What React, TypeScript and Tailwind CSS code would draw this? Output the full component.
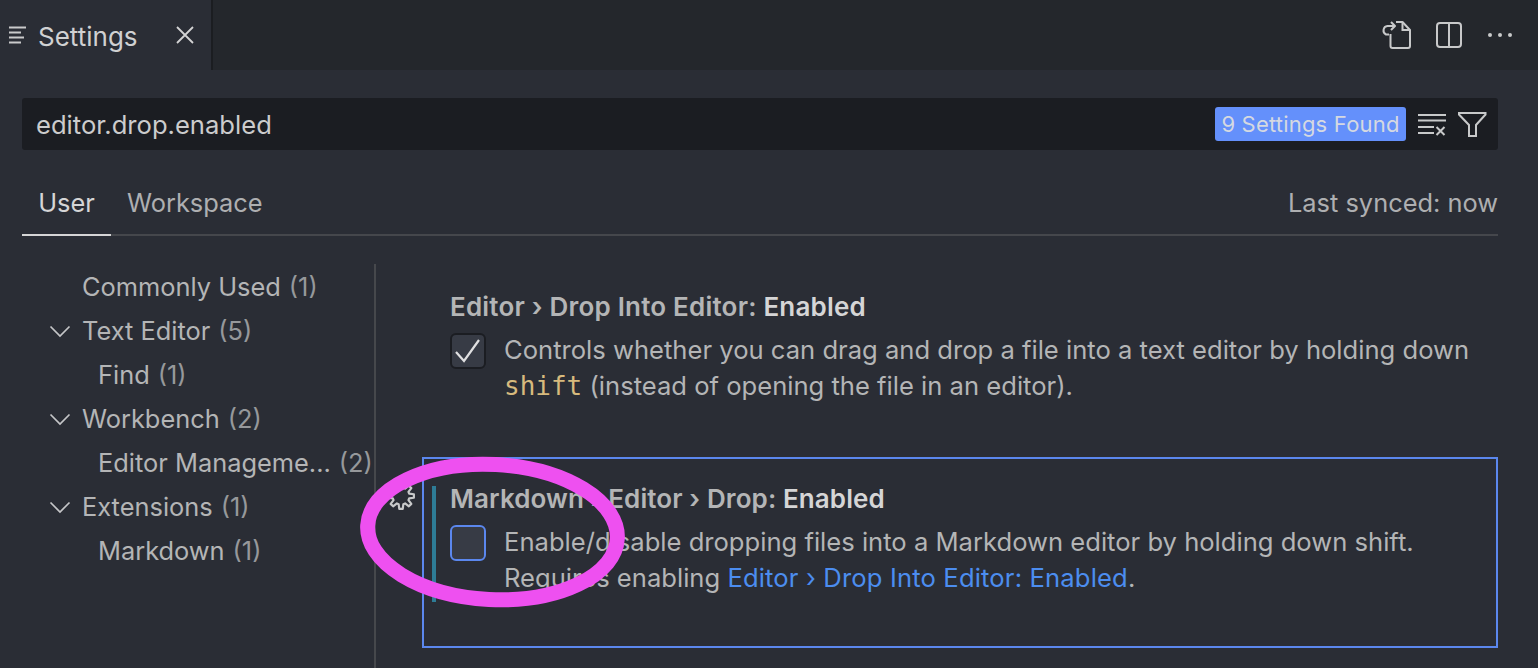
import React from "react";

const sans = "[font-family:Inter,'Noto_Sans',sans-serif]";

function Chevron() {
  return (
    <svg width="22" height="14" viewBox="0 0 22 14" fill="none" stroke="#c5c6c8" strokeWidth="1.7" className="shrink-0">
      <path d="M1.5 2.5 11 12 20.5 2.5" />
    </svg>
  );
}

function NavRow({ label, count, level, open }: { label: string; count: string; level: 0 | 1; open?: boolean }) {
  return (
    <div className={`flex h-11 items-center whitespace-nowrap text-[25.4px] ${level === 1 ? "pl-[98px]" : "pl-[82px]"} relative`}>
      {open && (
        <span className="absolute left-[49px] top-[15px]">
          <Chevron />
        </span>
      )}
      <span className="text-[#b4b5b6]">{label}</span>
      <span className="ml-[8px] text-[#96989b]">{count}</span>
    </div>
  );
}

function gearPath() {
  const cx = 15;
  const cy = 15;
  const teeth = 8;
  const pts: string[] = [];
  for (let i = 0; i < teeth; i++) {
    const a = (i / teeth) * Math.PI * 2;
    const step = (Math.PI * 2) / teeth;
    const offsets: [number, number][] = [
      [-0.36, 8.5],
      [-0.17, 13],
      [0.17, 13],
      [0.36, 8.5],
    ];
    for (const [o, r] of offsets) {
      const t = a + o * step;
      pts.push(`${(cx + r * Math.cos(t)).toFixed(2)} ${(cy + r * Math.sin(t)).toFixed(2)}`);
    }
  }
  return `M${pts.join("L")}Z`;
}

export default function App() {
  return (
    <div className={`relative h-[668px] w-[1538px] overflow-hidden bg-[#2a2d35] text-[25.6px] text-[#b4b5b6] ${sans}`}>
      {/* tab bar */}
      <div className="flex h-[70px] items-stretch bg-[#24272c]">
        <div className="flex w-[213px] items-center border-r-2 border-[#1b1d21] bg-[#2a2d35] pl-[9px]">
          <svg width="18" height="18" viewBox="0 0 18 18" stroke="#c9cacb" strokeWidth="2" className="mr-[11px]">
            <path d="M0 1.500h17M0 6.500h12M0 11.500h15M0 16.500h12" />
          </svg>
          <span className="pt-[2px] text-[26px] text-[#d0d1d2]">Settings</span>
          <svg width="18" height="18" viewBox="0 0 18 18" fill="none" stroke="#d4d4d5" strokeWidth="1.8" className="ml-[38px]">
            <path d="M1 1l16 16M17 1 1 17" />
          </svg>
        </div>
        <div className="ml-auto flex items-center pr-[26px]">
          <svg width="31" height="30" viewBox="0 0 31 30" fill="none" stroke="#c8c9ca" strokeWidth="2" className="mr-[23px]">
            <path d="M9.500 14V26a2 2 0 0 0 2 2H27a2 2 0 0 0 2-2V10L21.500 2H15" strokeLinejoin="round" />
            <path d="M21.500 2v8H29" />
            <path d="M10 2l4 4-4 4M14 6H6.500a4.500 4.500 0 0 0-1.500 8.500h3" strokeLinejoin="round" />
          </svg>
          <svg width="28" height="28" viewBox="0 0 28 28" fill="none" stroke="#c8c9ca" strokeWidth="2" className="mr-[25px]">
            <rect x="2" y="2" width="24" height="24" rx="3" />
            <path d="M14 2v24" />
          </svg>
          <div className="flex items-center gap-[6px]">
            <span className="h-1 w-1 rounded-full bg-[#c8c9ca]" />
            <span className="h-1 w-1 rounded-full bg-[#c8c9ca]" />
            <span className="h-1 w-1 rounded-full bg-[#c8c9ca]" />
          </div>
        </div>
      </div>

      <div className="pl-[22px] pr-[40px]">
        {/* search */}
        <div className="mt-[28px] flex h-[52px] items-center rounded-[3px] bg-[#1b1d22] pl-[14px] pr-[11px]">
          <span className="pt-[2px] text-[#cccccd]">editor.drop.enabled</span>
          <span className="ml-auto flex h-[34px] w-[191px] items-center justify-center whitespace-nowrap rounded-[3px] bg-[#6490fb] text-[22px] tracking-[0.2px] text-[#d5d9e1]">
            9 Settings Found
          </span>
          <svg width="29" height="24" viewBox="0 0 29 24" fill="none" stroke="#c8c9ca" strokeWidth="2" className="ml-[12px] mt-[2px]">
            <path d="M0 2h28M0 7.500h28M0 14h16M0 20h16" />
            <path d="M18.500 14l8 8M26.500 14l-8 8" />
          </svg>
          <svg width="29" height="25" viewBox="0 0 29 25" fill="none" stroke="#c8c9ca" strokeWidth="2" className="ml-[11px]">
            <path d="M1 1h26.500v1.500L18 13v11h-7V13L1 2.500z" />
          </svg>
        </div>

        {/* tabs */}
        <div className="mt-[28px] flex h-[58px] items-stretch border-b-2 border-[#45474c] text-[25.4px]">
          <div className="-mb-[2px] flex w-[89px] items-center justify-center border-b-2 border-[#d5d5d6] pb-[5px] text-[#d5d5d6]">User</div>
          <div className="ml-[16px] flex items-center pb-[5px] text-[#aeafb1]">Workspace</div>
          <div className="ml-auto flex items-center pb-[5px] text-[#aeafb1]">Last synced: now</div>
        </div>
      </div>

      {/* body */}
      <div className="relative mt-[28px] flex">
        <div className="h-[404px] w-[376px] shrink-0 border-r-2 border-[#46484c] pt-px">
          <NavRow label="Commonly Used" count="(1)" level={0} />
          <NavRow label="Text Editor" count="(5)" level={0} open />
          <NavRow label="Find" count="(1)" level={1} />
          <NavRow label="Workbench" count="(2)" level={0} open />
          <NavRow label="Editor Manageme..." count="(2)" level={1} />
          <NavRow label="Extensions" count="(1)" level={0} open />
          <NavRow label="Markdown" count="(1)" level={1} />
        </div>

        <div className="min-w-0 flex-1 pl-[46px] pr-[40px] pt-[20px]">
          <div className="pl-[28px]">
            <div className="flex h-[44px] items-center text-[26px] font-semibold tracking-[0.2px] text-[#b4b5b6]">
              Editor › Drop Into Editor:&nbsp;<span className="text-[#d5d5d6]">Enabled</span>
            </div>
            <div className="flex">
              <div className="mt-[5px] flex h-9 w-9 shrink-0 items-center justify-center rounded-[6px] border-2 border-[#1b1d22] bg-[#373b45]">
                <svg width="30" height="28" viewBox="0 0 30 28" fill="none" stroke="#e0e0e1" strokeWidth="2.200">
                  <path d="M3 15l8 9L26 3" />
                </svg>
              </div>
              <p className="ml-[18px] mt-[4px] leading-[36px]">
                Controls whether you can drag and drop a file into a text editor by holding down{" "}
                <code className="font-['DejaVu_Sans_Mono',monospace] text-[26px] leading-none text-[#d7ba7d]">shift</code> (instead of opening the file in an editor).
              </p>
            </div>
          </div>

          <div className="relative mt-[53px] h-[191px] w-[1076px] border-2 border-[#5b87ee] pl-[26px] pt-[17px]">
            <div className="absolute left-[8px] top-[27px] h-[116px] w-1 bg-[#2e7c96]" />
            <div className="flex h-[44px] items-center text-[26px] font-semibold tracking-[0.1px] text-[#b4b5b6]">
              Markdown › Editor › Drop:&nbsp;<span className="text-[#d5d5d6]">Enabled</span>
            </div>
            <div className="flex">
              <div className="mt-[5px] h-9 w-9 shrink-0 rounded-[6px] border-2 border-[#5b87ee] bg-[#373b45]" />
              <p className="ml-[18px] mt-[4px] leading-[36px]">
                Enable/disable dropping files into a Markdown editor by holding down shift. Requires enabling{" "}
                <span className="tracking-[0.15px] text-[#4c8df0]">Editor › Drop Into Editor: Enabled</span>.
              </p>
            </div>
          </div>
        </div>
      </div>

      {/* gear */}
      <svg width="30" height="30" viewBox="0 0 30 30" fill="none" stroke="#c8c9ca" strokeWidth="2.200" className="absolute left-[386px] top-[481px]">
        <path d={gearPath()} strokeLinejoin="round" />
      </svg>

      {/* annotation */}
      <svg width="280" height="166" viewBox="0 0 280 166" fill="none" className="absolute left-[355px] top-[455px]">
        <ellipse cx="137.500" cy="77" rx="125" ry="67.500" stroke="#ee50f0" strokeWidth="15" transform="rotate(3 137.500 77)" />
      </svg>
    </div>
  );
}
